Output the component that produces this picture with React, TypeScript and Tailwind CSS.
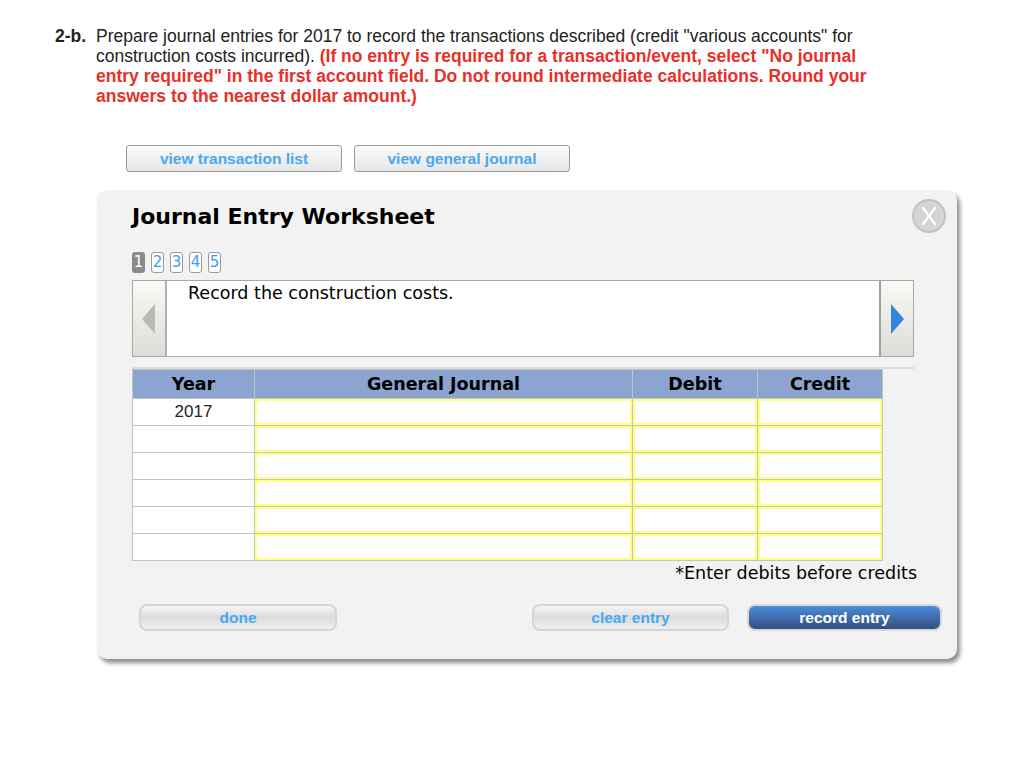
import React from "react";

// Journal entry worksheet screen

const ROWS = [0, 1, 2, 3, 4, 5];

function Pager() {
  return (
    <div className="flex gap-[6px]">
      <span className="flex h-[21px] w-[13px] items-center justify-center rounded-[3px] bg-[#8a8a8a] text-[15px] text-white">
        1
      </span>
      {[2, 3, 4, 5].map((n) => (
        <span
          key={n}
          className="flex h-[21px] w-[13px] items-center justify-center rounded-[3px] border border-[#9a9a9a] bg-white text-[15px] text-[#3d9cf0]"
        >
          {n}
        </span>
      ))}
    </div>
  );
}

function PillButton({ label, primary, width }: { label: string; primary?: boolean; width: string }) {
  return (
    <button
      className={`${width} h-[27px] rounded-[8px] font-['Liberation_Sans',Arial,sans-serif] text-[15.5px] font-bold ${
        primary
          ? "border-2 border-[#d8d8d8] bg-gradient-to-b from-[#4b8ddc] to-[#344f80] text-white"
          : "border-2 border-[#d4d4d4] bg-gradient-to-b from-[#f6f6f6] via-[#dcdcdc] to-[#f0f0f0] text-[#4aa8f0]"
      }`}
    >
      {label}
    </button>
  );
}

export default function App() {
  return (
    <div className="h-[779px] w-[1024px] bg-white font-['Liberation_Sans',Arial,sans-serif]">
      <div className="flex pl-[55px] pt-[26px] text-[17.5px] leading-[20px] text-[#222]">
        <span className="w-[41px] shrink-0 font-bold">2-b.</span>
        <p className="whitespace-nowrap">
          Prepare journal entries for 2017 to record the transactions described (credit "various accounts" for
          <br />
          construction costs incurred).{" "}
          <span className="font-bold text-[#e8302a]">
            (If no entry is required for a transaction/event, select "No journal
            <br />
            entry required" in the first account field. Do not round intermediate calculations. Round your
            <br />
            answers to the nearest dollar amount.)
          </span>
        </p>
      </div>

      <div className="mt-[39px] flex gap-[12px] pl-[126px]">
        <button className="h-[27px] w-[216px] rounded-[3px] border border-[#9a9a9a] bg-gradient-to-b from-[#fafafa] to-[#e6e6e6] text-[15.5px] font-bold text-[#4aa8f0]">
          view transaction list
        </button>
        <button className="h-[27px] w-[216px] rounded-[3px] border border-[#9a9a9a] bg-gradient-to-b from-[#fafafa] to-[#e6e6e6] text-[15.5px] font-bold text-[#4aa8f0]">
          view general journal
        </button>
      </div>

      <div className="ml-[97px] mt-[18px] h-[469px] w-[860px] rounded-[10px] bg-[#f2f2f2] pl-[35px] pr-[44px] pt-[11px] shadow-[3px_4px_4px_rgba(0,0,0,0.45)] font-['DejaVu_Sans',Verdana,sans-serif]">
        <div className="flex items-center justify-between">
          <h1 className="text-[22px] font-bold leading-[32px] text-black">Journal Entry Worksheet</h1>
          <div className="-mr-[33px] mt-[-2px] flex h-[34px] w-[34px] items-center justify-center rounded-full border-2 border-[#c2c2c2] bg-[#d4d4d4]">
            <svg width="18" height="20" viewBox="0 0 18 20">
              <path d="M3 2 L15 18 M15 2 L3 18" stroke="white" strokeWidth="2.4" strokeLinecap="round" />
            </svg>
          </div>
        </div>

        <div className="mt-[19px]">
          <Pager />
        </div>

        <div className="mt-[7px] flex h-[77px] w-[782px] border border-[#a8a8a8] bg-white">
          <div className="flex w-[34px] items-center justify-center border-r-2 border-[#b0b0b0] bg-gradient-to-b from-[#fafaf5] to-[#dcdcd8]">
            <svg width="14" height="30" viewBox="0 0 14 30">
              <path d="M13 0 L0 15 L13 30 Z" fill="#b9b9b9" />
            </svg>
          </div>
          <div className="flex-1 pl-[21px] text-[17.5px] leading-[24px] text-black">Record the construction costs.</div>
          <div className="flex w-[34px] items-center justify-center border-l-2 border-[#a0a0a0] bg-gradient-to-b from-[#fafaf5] to-[#dcdcd8]">
            <svg width="14" height="30" viewBox="0 0 14 30">
              <path d="M1 0 L14 15 L1 30 Z" fill="#2f86e3" />
            </svg>
          </div>
        </div>

        <div className="mt-[10px] w-[782px] border-t-2 border-[#dcdcdc]">
          <table className="w-[751px] border-collapse text-[17.5px]">
            <thead>
              <tr className="h-[29px] bg-[#8ca4d0] font-bold text-black">
                <th className="w-[122px] border border-[#c4c4c4]">Year</th>
                <th className="w-[378px] border border-[#c4c4c4]">General Journal</th>
                <th className="w-[125px] border border-[#c4c4c4]">Debit</th>
                <th className="w-[125px] border border-[#c4c4c4]">Credit</th>
              </tr>
            </thead>
            <tbody>
              {ROWS.map((r) => (
                <tr key={r} className="h-[27px] bg-white">
                  <td className="border border-[#c4c4c4] text-center font-['Liberation_Sans',Arial,sans-serif] text-[17px] leading-[20px] text-[#222]">
                    {r === 0 ? "2017" : ""}
                  </td>
                  {[0, 1, 2].map((c) => (
                    <td key={c} className="border border-[#c4c4c4] p-0">
                      <div className="h-[26px] border-2 border-[#ffff80] bg-white" />
                    </td>
                  ))}
                </tr>
              ))}
            </tbody>
          </table>
        </div>

        <div className="mt-[2px] w-[785px] text-right text-[17.5px] leading-[20px] text-black">
          *Enter debits before credits
        </div>

        <div className="mt-[21px] flex w-[810px] items-center pl-[7px]">
          <PillButton label="done" width="w-[198px]" />
          <div className="ml-auto flex gap-[18px]">
            <PillButton label="clear entry" width="w-[197px]" />
            <PillButton label="record entry" primary width="w-[195px]" />
          </div>
        </div>
      </div>
    </div>
  );
}
